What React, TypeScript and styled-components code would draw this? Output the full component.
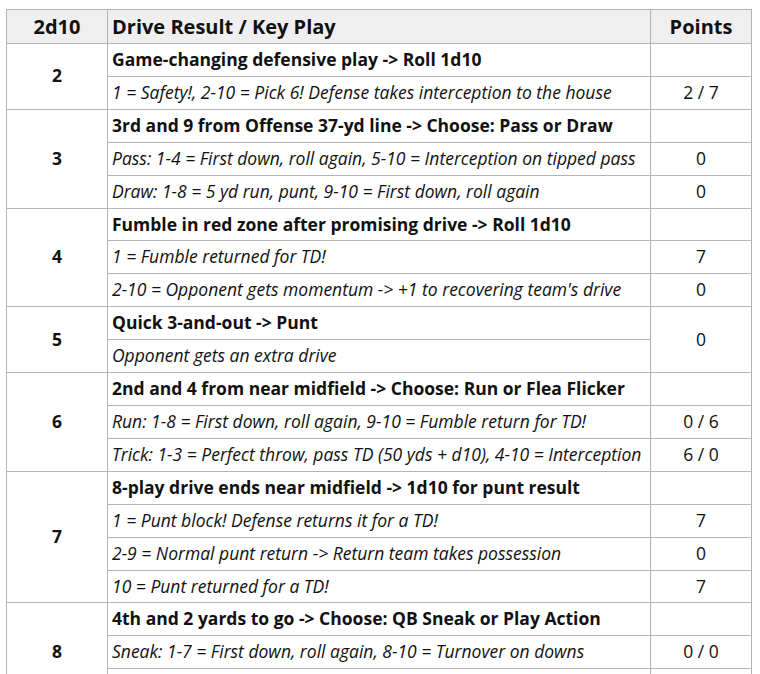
import { Fragment } from 'react';
import styled, { createGlobalStyle } from 'styled-components';

type Row = { text: string; head?: boolean; pts?: string; span?: number; skipPts?: boolean };
type Group = { roll: string; rows: Row[] };

const groups: Group[] = [
  {
    roll: '2',
    rows: [
      { text: 'Game-changing defensive play -> Roll 1d10', head: true, pts: '' },
      { text: '1 = Safety!, 2-10 = Pick 6! Defense takes interception to the house', pts: '2 / 7' },
    ],
  },
  {
    roll: '3',
    rows: [
      { text: '3rd and 9 from Offense 37-yd line -> Choose: Pass or Draw', head: true, pts: '' },
      { text: 'Pass: 1-4 = First down, roll again, 5-10 = Interception on tipped pass', pts: '0' },
      { text: 'Draw: 1-8 = 5 yd run, punt, 9-10 = First down, roll again', pts: '0' },
    ],
  },
  {
    roll: '4',
    rows: [
      { text: 'Fumble in red zone after promising drive -> Roll 1d10', head: true, pts: '' },
      { text: '1 = Fumble returned for TD!', pts: '7' },
      { text: "2-10 = Opponent gets momentum -> +1 to recovering team's drive", pts: '0' },
    ],
  },
  {
    roll: '5',
    rows: [
      { text: 'Quick 3-and-out -> Punt', head: true, pts: '0', span: 2 },
      { text: 'Opponent gets an extra drive', skipPts: true },
    ],
  },
  {
    roll: '6',
    rows: [
      { text: '2nd and 4 from near midfield -> Choose: Run or Flea Flicker', head: true, pts: '' },
      { text: 'Run: 1-8 = First down, roll again, 9-10 = Fumble return for TD!', pts: '0 / 6' },
      { text: 'Trick: 1-3 = Perfect throw, pass TD (50 yds + d10), 4-10 = Interception', pts: '6 / 0' },
    ],
  },
  {
    roll: '7',
    rows: [
      { text: '8-play drive ends near midfield -> 1d10 for punt result', head: true, pts: '' },
      { text: '1 = Punt block! Defense returns it for a TD!', pts: '7' },
      { text: '2-9 = Normal punt return -> Return team takes possession', pts: '0' },
      { text: '10 = Punt returned for a TD!', pts: '7' },
    ],
  },
  {
    roll: '8',
    rows: [
      { text: '4th and 2 yards to go -> Choose: QB Sneak or Play Action', head: true, pts: '' },
      { text: 'Sneak: 1-7 = First down, roll again, 8-10 = Turnover on downs', pts: '0 / 0' },
      { text: 'Play Action: 1-5 = Touchdown pass!, 6-10 = Sack, punt', pts: '7 / 0' },
    ],
  },
];

export default function App() {
  return (
    <>
      <GlobalStyle />
      <Page>
        <Table>
          <colgroup>
            <col style={{ width: 101 }} />
            <col />
            <col style={{ width: 101 }} />
          </colgroup>
          <thead>
            <tr>
              <HeadCell $align="center">2d10</HeadCell>
              <HeadCell $align="left">Drive Result / Key Play</HeadCell>
              <HeadCell $align="center">Points</HeadCell>
            </tr>
          </thead>
          <tbody>
            {groups.map((g) => (
              <Fragment key={g.roll}>
                {g.rows.map((r, i) => (
                  <tr key={i}>
                    {i === 0 && <RollCell rowSpan={g.rows.length}>{g.roll}</RollCell>}
                    <PlayCell $head={!!r.head}>{r.text}</PlayCell>
                    {!r.skipPts && <PointsCell rowSpan={r.span ?? 1}>{r.pts}</PointsCell>}
                  </tr>
                ))}
              </Fragment>
            ))}
          </tbody>
        </Table>
      </Page>
    </>
  );
}

const GlobalStyle = createGlobalStyle`
  body {
    margin: 0;
    background: #fff;
    font-family: "Open Sans", "Noto Sans", sans-serif;
    color: #111;
  }
`;

const Page = styled.div`
  padding: 9px 8px 0 6px;
`;

const Table = styled.table`
  width: 746px;
  border-collapse: collapse;
  table-layout: fixed;
  font-size: 17.5px;
  line-height: 23.9px;

  td,
  th {
    border: 1px solid #b4b4b4;
  }
`;

const HeadCell = styled.th<{ $align: 'left' | 'center' }>`
  background: #efefef;
  font-size: 20px;
  line-height: 29px;
  font-weight: 700;
  text-align: ${(p) => p.$align};
  padding: 2px 4px;
`;

const RollCell = styled.td`
  font-weight: 700;
  text-align: center;
  vertical-align: middle;
  padding: 4px;
`;

const PlayCell = styled.td<{ $head: boolean }>`
  padding: 4px;
  font-weight: ${(p) => (p.$head ? 700 : 400)};
  font-style: ${(p) => (p.$head ? 'normal' : 'italic')};
  white-space: nowrap;
  overflow: hidden;
`;

const PointsCell = styled.td`
  text-align: center;
  vertical-align: middle;
  padding: 4px;
`;
